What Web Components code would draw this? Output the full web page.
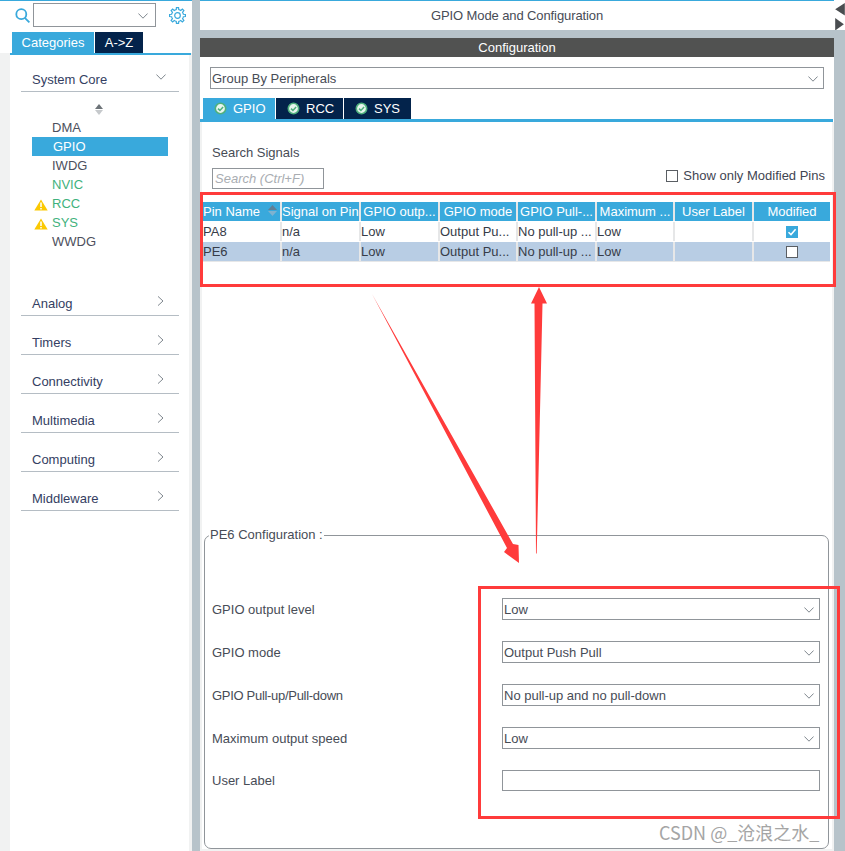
<!DOCTYPE html>
<html lang="zh">
<head>
<meta charset="utf-8">
<title>GPIO Mode and Configuration</title>
<style>
html,body{margin:0;padding:0;background:#fff}
body{font:13px/16px "Liberation Sans",Arial,sans-serif;color:#474c56;overflow:hidden}
</style>
</head>
<body>
<cube-app>
  <side-panel slot="side"></side-panel>
  <main-panel slot="main"></main-panel>
</cube-app>
<script>
const BLUE='#39a9dc', NAVY='#03234b', GREY='#b7c3ca', LIGHT='#f1f2f2', EDGE='#90959a';
function def(name, css, html, extra){
  const tpl=document.createElement('template');
  tpl.innerHTML=`<style>${css}</style>${html}`;
  class C extends HTMLElement{
    constructor(){super();this.attachShadow({mode:'open'}).appendChild(tpl.content.cloneNode(true));}
    connectedCallback(){ if(extra) extra.call(this,this.shadowRoot); }
  }
  customElements.define(name,C);
}
const chevron=(w=10,h=5,dir='down')=>dir==='down'
 ?`<svg width="${w}" height="${h+1}" viewBox="0 0 10 6" fill="none" stroke="#7f878e" stroke-width="1"><path d="M.4.5 5 5.2 9.6.5"/></svg>`
 :`<svg width="7" height="10" viewBox="0 0 7 10" fill="none" stroke="#7f878e" stroke-width="1"><path d="M1 .4 6 5 1 9.6"/></svg>`;

function gearPath(cx,cy,ro,ri,n){
  let d='';
  for(let i=0;i<n;i++){
    const a=i*2*Math.PI/n, s=2*Math.PI/n;
    const pts=[[ri,a-s*.5],[ri,a-s*.27],[ro,a-s*.17],[ro,a+s*.17],[ri,a+s*.27]];
    pts.forEach((p,j)=>{const x=cx+p[0]*Math.cos(p[1]),y=cy+p[0]*Math.sin(p[1]);d+=(i===0&&j===0?'M':'L')+x.toFixed(2)+' '+y.toFixed(2);});
  }
  return d+'Z';
}

def('select-box',`
 :host{display:flex;align-items:center;justify-content:space-between;box-sizing:border-box;height:22px;border:1px solid ${EDGE};background:#fff;padding:1px 5px 0 1px;color:#474c56}
 svg{flex:none}
`,`<span><slot></slot></span>${chevron()}`);

def('check-icon',`
 :host{display:inline-flex;width:13px;height:13px}
`,`<svg width="13" height="13" viewBox="0 0 13 13"><circle cx="6.5" cy="6.5" r="5.2" fill="#e8f5ee" stroke="#4fb07d" stroke-width="1.6"/><path d="M4 6.6 5.9 8.4 9.1 4.9" fill="none" stroke="#4fb07d" stroke-width="1.5"/></svg>`);

def('tab-button',`
 :host{display:inline-flex;align-items:center;box-sizing:border-box;height:21px;background:${NAVY};color:#fff;font-size:13px}
 :host([active]){background:${BLUE}}
`,`<slot></slot>`);

def('warn-icon',`:host{display:inline-flex;width:14px;height:12px}`,
`<svg width="14" height="12" viewBox="0 0 14 12"><path d="M7 .4 13.7 11.6H.3Z" fill="#fbc902"/><path d="M7 3.6V8M7 9.1v1.4" stroke="#fff" stroke-width="1.5"/></svg>`);

def('tree-item',`
 :host{display:block;height:19px;line-height:19px;box-sizing:border-box;padding-left:42px;position:relative;color:#4d4f5c;margin-right:11px}
 :host([selected]){background:${BLUE};color:#fff;padding-left:21px;margin-left:22px}
 :host([ok]){color:#3fb27d}
 .w{position:absolute;left:24px;top:3px}
`,`<span class="w"><slot name="icon"></slot></span><slot></slot>`);

def('cat-head',`
 :host{display:flex;align-items:flex-end;justify-content:space-between;box-sizing:border-box;height:39px;border-bottom:1px solid #b5bdc4;padding:0 15px 3px 11px;color:#343e62}
 .c{margin-bottom:6px;display:flex}
 ::slotted(span){display:flex}
 :host([open]){height:37px;padding-right:13px}
 :host([open]) .c{margin-bottom:8px}
`,`<span><slot></slot></span><span class="c"><slot name="chev"></slot></span>`);

def('side-panel',`
 :host{display:flex;flex-direction:column;height:851px;background:${LIGHT}}
 .top{background:#fff;border-top:1px solid ${BLUE};height:53px;box-sizing:border-box}
 .search{display:flex;align-items:center;height:24px;margin-top:2px;padding-left:15px}
 .search select-box{width:123px;height:24px;margin-left:3px;padding-right:7px}
 .gear{margin-left:13px;display:flex}
 .tabs{display:flex;gap:1px;margin:5px 0 0 12px}
 .tabs tab-button{justify-content:center}
 .rule{height:2px;background:${BLUE};margin:0 1px 0 10px}
 .list{flex:1;background:#fff;margin:0 3px 0 10px;padding:0 10px 0 0}
 .list cat-head{margin-left:11px}
 .sort{height:26px;display:flex;justify-content:center;padding:12px 0 0 0;box-sizing:border-box;margin-left:9px}
 .gap{height:26px}
`,`
 <div class="top">
  <div class="search">
   <svg width="15" height="15" viewBox="0 0 15 15" fill="none" stroke="${BLUE}" stroke-width="1.8"><circle cx="6.3" cy="6.2" r="5"/><path d="M9.8 9.8 14.4 14.4"/></svg>
   <select-box></select-box>
   <span class="gear"><svg width="17" height="17" viewBox="0 0 17 17" fill="none" stroke="${BLUE}" stroke-width="1.2"><path id="g"/><circle cx="8.5" cy="8.5" r="2.8"/></svg></span>
  </div>
  <div class="tabs">
   <tab-button active style="width:82px">Categories</tab-button>
   <tab-button style="width:48px">A-&gt;Z</tab-button>
  </div>
 </div>
 <div class="rule"></div>
 <div class="list">
  <cat-head open>System Core<span slot="chev">${chevron()}</span></cat-head>
  <div class="sort"><svg width="8" height="11" viewBox="0 0 8 11"><path d="M4 0 8 5H0Z" fill="#6d7378"/><path d="M0 6H8L4 11Z" fill="#c6c9cc"/></svg></div>
  <tree-item>DMA</tree-item>
  <tree-item selected>GPIO</tree-item>
  <tree-item>IWDG</tree-item>
  <tree-item ok>NVIC</tree-item>
  <tree-item ok><warn-icon slot="icon"></warn-icon>RCC</tree-item>
  <tree-item ok><warn-icon slot="icon"></warn-icon>SYS</tree-item>
  <tree-item>WWDG</tree-item>
  <div class="gap"></div>
  <cat-head>Analog<span slot="chev">${chevron(7,9,'r')}</span></cat-head>
  <cat-head>Timers<span slot="chev">${chevron(7,9,'r')}</span></cat-head>
  <cat-head>Connectivity<span slot="chev">${chevron(7,9,'r')}</span></cat-head>
  <cat-head>Multimedia<span slot="chev">${chevron(7,9,'r')}</span></cat-head>
  <cat-head>Computing<span slot="chev">${chevron(7,9,'r')}</span></cat-head>
  <cat-head>Middleware<span slot="chev">${chevron(7,9,'r')}</span></cat-head>
 </div>`,
 function(r){r.getElementById('g').setAttribute('d',gearPath(8.5,8.5,8,6,8));});

def('sig-row',`
 :host{display:grid;grid-template-columns:77px 77px 77px 76px 77px 76px 77px 76px;column-gap:2px;height:19px;background:#e6e7e8;color:#363c48}
`,`<slot></slot>`);

def('sig-cell',`
 :host{display:block;overflow:hidden;white-space:nowrap;line-height:19px;background:#fff;min-width:0;position:relative}
 :host([head]){background:${BLUE};color:#fff;text-align:center}
 :host([head][left]){text-align:left}
 :host([alt]){background:#b8cde4}
 :host([mid]){display:flex;align-items:center;justify-content:center}
 .s{position:absolute;right:3px;top:2px;display:none}
 :host([sort]) .s{display:block}
`,`<slot></slot><svg class="s" width="9" height="13" viewBox="0 0 9 13"><path d="M4.5 1 9 6H0Z" fill="#5f7f96"/><path d="M0 7H9L4.5 12Z" fill="#7fb2cf"/></svg>`);

def('tick-box',`
 :host{display:inline-flex;box-sizing:border-box;width:12px;height:12px;border:1px solid #5a5e63;background:#fff}
 :host([on]){background:${BLUE};border-color:${BLUE}}
 svg{display:none}
 :host([on]) svg{display:block}
`,`<svg width="10" height="10" viewBox="0 0 10 10" fill="none" stroke="#fff" stroke-width="1.5"><path d="M1.5 5.2 4 7.6 8.6 2.2"/></svg>`);

def('signal-table',`
 :host{display:flex;flex-direction:column;row-gap:1px;margin:13px 2px 0 1px;background:#fff}
 sig-row:last-child{border-bottom:1px solid #e6e7e8}
`,`
 <sig-row>
  <sig-cell head left sort>Pin Name</sig-cell><sig-cell head left>Signal on Pin</sig-cell><sig-cell head>GPIO outp...</sig-cell><sig-cell head>GPIO mode</sig-cell><sig-cell head>GPIO Pull-...</sig-cell><sig-cell head>Maximum ...</sig-cell><sig-cell head>User Label</sig-cell><sig-cell head>Modified</sig-cell>
 </sig-row>
 <sig-row>
  <sig-cell>PA8</sig-cell><sig-cell>n/a</sig-cell><sig-cell>Low</sig-cell><sig-cell>Output Pu...</sig-cell><sig-cell>No pull-up ...</sig-cell><sig-cell>Low</sig-cell><sig-cell></sig-cell><sig-cell mid><tick-box on></tick-box></sig-cell>
 </sig-row>
 <sig-row>
  <sig-cell alt>PE6</sig-cell><sig-cell alt>n/a</sig-cell><sig-cell alt>Low</sig-cell><sig-cell alt>Output Pu...</sig-cell><sig-cell alt>No pull-up ...</sig-cell><sig-cell alt>Low</sig-cell><sig-cell alt></sig-cell><sig-cell alt mid><tick-box></tick-box></sig-cell>
 </sig-row>`);

def('config-row',`
 :host{display:grid;grid-template-columns:290px 318px;align-items:center;height:22px;margin-bottom:21px;color:#474c56}
 .l{padding-top:1px}
 :host([last]){height:21px}
 :host([last]) .l{padding-top:0}
`,`<span class="l"><slot name="label"></slot></span><slot></slot>`);

def('config-group',`
 :host{display:block;margin:265px 3px 0 2px}
 fieldset{margin:0;box-sizing:border-box;height:322px;border:1px solid ${EDGE};border-radius:7px;padding:55px 0 0 7px}
 legend{margin-left:-3px;padding:0 1px;line-height:16px;color:#474c56}
 .input{box-sizing:border-box;height:21px;border:1px solid ${EDGE};background:#fff}
 .tight{letter-spacing:-.3px}
`,`<fieldset><legend>PE6 Configuration :</legend>
  <config-row><span slot="label">GPIO output level</span><select-box>Low</select-box></config-row>
  <config-row><span slot="label">GPIO mode</span><select-box>Output Push Pull</select-box></config-row>
  <config-row><span slot="label" class="tight">GPIO Pull-up/Pull-down</span><select-box>No pull-up and no pull-down</select-box></config-row>
  <config-row><span slot="label">Maximum output speed</span><select-box>Low</select-box></config-row>
  <config-row last><span slot="label">User Label</span><div class="input"></div></config-row>
 </fieldset>`);

def('main-panel',`
 :host{display:flex;flex-direction:column;height:851px;background:${GREY}}
 .title{height:30px;box-sizing:border-box;border-top:1px solid ${BLUE};background:#fff;display:flex;align-items:center;justify-content:center;color:#474c56;letter-spacing:-.1px}
 .bar{height:19px;margin-top:8px;background:#515251;color:#fff;text-align:center;line-height:19px}
 .body{flex:1;background:#fff;display:flex;flex-direction:column;min-height:0}
 .group{margin:10px 10px 0 10px}
 .tabs{display:flex;gap:1px;margin:9px 0 0 3px;height:21px}
 .tabs tab-button{padding-left:11px;gap:6px}
 .rule{height:3px;background:${BLUE};margin-right:1px}
 .inner{flex:1;border:solid ${LIGHT};border-width:0 2px 2px 2px;min-height:0}
 .search{display:flex;justify-content:space-between;align-items:flex-end;padding:23px 7px 0 10px}
 .q{width:112px;height:21px;box-sizing:border-box;border:1px solid ${EDGE};margin-top:7px;font-style:italic;color:#a9adb2;line-height:19px;padding-left:2px}
 .only{display:flex;align-items:center;gap:5px;margin-bottom:5px;color:#3f4552}
`,`
 <div class="title">GPIO Mode and Configuration</div>
 <div class="bar">Configuration</div>
 <div class="body">
  <select-box class="group">Group By Peripherals</select-box>
  <div class="tabs">
   <tab-button active style="width:72px"><check-icon></check-icon>GPIO</tab-button>
   <tab-button style="width:67px"><check-icon></check-icon>RCC</tab-button>
   <tab-button style="width:67px"><check-icon></check-icon>SYS</tab-button>
  </div>
  <div class="rule"></div>
  <div class="inner">
   <div class="search">
    <div><div>Search Signals</div><div class="q">Search (Ctrl+F)</div></div>
    <div class="only"><tick-box></tick-box>Show only Modified Pins</div>
   </div>
   <signal-table></signal-table>
   <config-group></config-group>
  </div>
 </div>`);

def('annotation-layer',`
 :host{position:absolute;inset:0;pointer-events:none}
 .box{position:absolute;box-sizing:border-box;border:3px solid #ff3b3b}
 svg{position:absolute;left:0;top:0}
 .mark{position:absolute;left:659px;top:820px;font:18px/24px "Noto Sans CJK SC","Liberation Sans",sans-serif;color:#a5a5a5;text-shadow:0 0 2px #fff,0 0 2px #fff;white-space:nowrap}
`,`
 <div class="box" style="left:200px;top:192px;width:636px;height:95px"></div>
 <div class="box" style="left:478px;top:586px;width:362px;height:233px"></div>
 <svg width="845" height="851" fill="#ff3b3b">
  <polygon points="372,294 513,544 518.5,545 519,563 504,552 507,548"/>
  <polygon points="539,287 547,303.5 542.5,303.5 536.7,553.5 536,553.5 534.5,303.5 531,303.5"/>
 </svg>
 <div class="mark">CSDN @_沧浪之水_</div>`);

def('cube-app',`
 :host{display:grid;grid-template-columns:192px 8px 634px 11px;position:relative;width:845px;height:851px;background:${GREY};overflow:hidden}
 .d{background:${GREY}}
 .ctl{background:${GREY};display:flex;flex-direction:column}
 .ctl .w{height:30px;background:#fff;display:flex;flex-direction:column;gap:2px;padding:3px 0 0 1px;box-sizing:border-box}
 .ctl svg{display:block}
`,`
 <slot name="side"></slot>
 <div class="d"></div>
 <slot name="main"></slot>
 <div class="ctl"><div class="w">
  <svg width="10" height="13" viewBox="0 0 10 13"><path d="M10 0 0 6.5 10 13Z" fill="#4a4d50"/></svg>
  <svg width="10" height="13" viewBox="0 0 10 13"><path d="M0 0 9 6.5 0 13Z" fill="#4a4d50"/></svg>
 </div></div>
 <annotation-layer></annotation-layer>`);
</script>
</body>
</html>
